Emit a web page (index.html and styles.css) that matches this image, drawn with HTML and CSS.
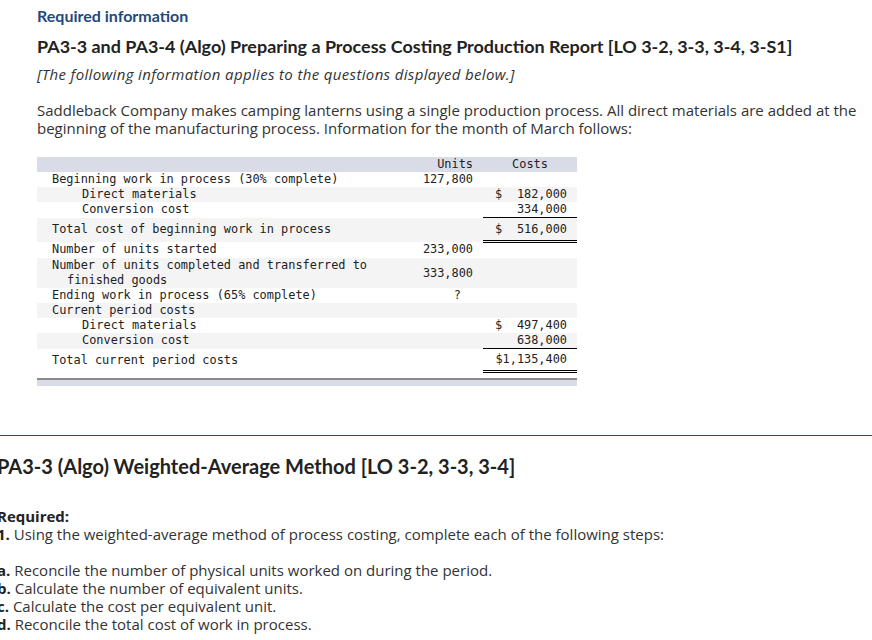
FILE: index.html
```html
<!DOCTYPE html>
<html>
<head>
<meta charset="utf-8">
<link rel="stylesheet" href="styles.css">
</head>
<body>
<div class="top">
  <div class="req-info">Required information</div>
  <h1 class="title">PA3-3 and PA3-4 (Algo) Preparing a Process Costing Production Report [LO 3-2, 3-3, 3-4, 3-S1]</h1>
  <p class="note">[The following information applies to the questions displayed below.]</p>
  <p class="intro">Saddleback Company makes camping lanterns using a single production process. All direct materials are added at the beginning of the manufacturing process. Information for the month of March follows:</p>

  <table class="data">
    <colgroup><col class="c1"><col class="c2"><col class="c3"></colgroup>
    <thead>
      <tr class="head"><th class="lbl"></th><th class="units">Units</th><th class="costs">Costs</th></tr>
    </thead>
    <tbody>
      <tr class="w"><td class="lbl">Beginning work in process (30% complete)</td><td class="units">127,800</td><td class="costs"></td></tr>
      <tr class="g"><td class="lbl in2">Direct materials</td><td class="units"></td><td class="costs"><span class="cur">$</span>182,000</td></tr>
      <tr class="w"><td class="lbl in2">Conversion cost</td><td class="units"></td><td class="costs single">334,000</td></tr>
      <tr class="g tall"><td class="lbl">Total cost of beginning work in process</td><td class="units"></td><td class="costs double"><span class="cur">$</span>516,000</td></tr>
      <tr class="w"><td class="lbl">Number of units started</td><td class="units">233,000</td><td class="costs"></td></tr>
      <tr class="g"><td class="lbl">Number of units completed and transferred to<br><span class="in1">finished goods</span></td><td class="units">333,800</td><td class="costs"></td></tr>
      <tr class="w"><td class="lbl">Ending work in process (65% complete)</td><td class="units q">?</td><td class="costs"></td></tr>
      <tr class="g"><td class="lbl">Current period costs</td><td class="units"></td><td class="costs"></td></tr>
      <tr class="w"><td class="lbl in2">Direct materials</td><td class="units"></td><td class="costs"><span class="cur">$</span>497,400</td></tr>
      <tr class="g"><td class="lbl in2">Conversion cost</td><td class="units"></td><td class="costs single">638,000</td></tr>
      <tr class="w tall last"><td class="lbl">Total current period costs</td><td class="units"></td><td class="costs double">$1,135,400</td></tr>
    </tbody>
    <tfoot>
      <tr class="gap"><td colspan="3"></td></tr>
      <tr class="foot"><td colspan="3"></td></tr>
    </tfoot>
  </table>
</div>

<hr class="divider">

<div class="part">
  <h2 class="part-title">PA3-3 (Algo) Weighted-Average Method [LO 3-2, 3-3, 3-4]</h2>
  <div class="required"><b>Required:</b><br><b>1.</b> Using the weighted-average method of process costing, complete each of the following steps:</div>
  <ol class="steps">
    <li><b>a.</b> Reconcile the number of physical units worked on during the period.</li>
    <li><b>b.</b> Calculate the number of equivalent units.</li>
    <li><b>c.</b> Calculate the cost per equivalent unit.</li>
    <li><b>d.</b> Reconcile the total cost of work in process.</li>
  </ol>
</div>
</body>
</html>
```

FILE: styles.css
```css
html, body {
  margin: 0;
  padding: 0;
  background: #fff;
  overflow: hidden;
}
body {
  font-family: "Open Sans", Lato, sans-serif;
  color: #222;
  width: 872px;
  height: 640px;
}
.top {
  padding: 7px 0 0 37px;
}
.req-info {
  font-family: Lato, sans-serif;
  color: #1f4a7c;
  font-weight: 700;
  font-size: 16px;
  line-height: 18px;
}
.title {
  font-family: Lato, sans-serif;
  margin: 11px 0 0;
  font-size: 17.95px;
  line-height: 20px;
  font-weight: 700;
  color: #222;
}
.note {
  margin: 9px 0 0;
  font-style: italic;
  font-size: 15px;
  letter-spacing: 0.35px;
  line-height: 18px;
  color: #333;
}
.intro {
  margin: 18px 0 0;
  font-size: 15px;
  line-height: 18px;
  color: #333;
  width: 830px;
}
.data {
  margin-top: 20px;
  border-collapse: collapse;
  table-layout: fixed;
  width: 540px;
  font-family: "DejaVu Sans Mono", "Liberation Mono", monospace;
  font-size: 11.9px;
  color: #222;
}
.c1 { width: 371px; }
.c2 { width: 75px; }
.c3 { width: 94px; }
.data td, .data th {
  padding: 0;
  line-height: 15px;
  height: 15px;
  vertical-align: middle;
  font-weight: normal;
}
.head th {
  background: #d9dce6;
}
.data .lbl {
  padding-left: 15px;
  text-align: left;
}
.data .in2 { padding-left: 45px; }
.in1 { padding-left: 15px; }
.data .units {
  text-align: right;
  padding-right: 10px;
}
.data .q { padding-right: 22px; }
.data .costs {
  text-align: right;
  padding-right: 10px;
  padding-left: 12px;
  white-space: nowrap;
}
.data th.costs {
  text-align: center;
  padding: 0 0 0 0;
}
.cur {
  float: left;
}
.w td { background: #fff; }
.g td { background: #f4f4f4; }
.data .tall td { height: 22px; }
.data .last td { height: 21px; }
.data td.single {
  border-bottom: 1px solid #000;
}
.data td.double {
  border-bottom: 3px double #000;
}
.data .gap td { height: 5px; background: #fff; }
.data .foot td {
  height: 6px;
  background: #d9dce6;
  border-top: 2px solid #8a8a8a;
}
.divider {
  margin: 49px 0 0;
  border: none;
  border-top: 1px solid #1f4a7c;
  height: 0;
}
.part {
  margin-left: -3px;
}
.part-title {
  font-family: Lato, sans-serif;
  margin: 19px 0 0;
  font-size: 20px;
  line-height: 22px;
  font-weight: 700;
  color: #222;
}
.required {
  margin-top: 30px;
  font-size: 15px;
  line-height: 18px;
  color: #333;
}
.required b { color: #222; font-weight: 700; }
.steps {
  list-style: none;
  margin: 18px 0 0;
  padding: 0;
  font-size: 15px;
  line-height: 18px;
  color: #333;
}
.steps b { color: #222; font-weight: 700; }
```
